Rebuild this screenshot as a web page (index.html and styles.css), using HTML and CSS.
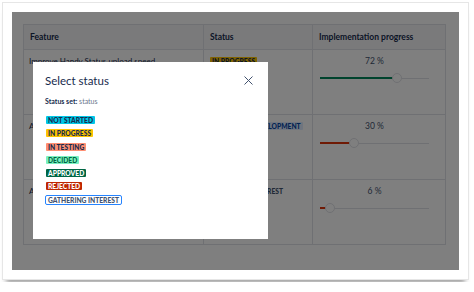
FILE: index.html
```html
<!DOCTYPE html>
<html>
<head>
  <meta charset="utf-8">
  <title>Select status</title>
  <link rel="stylesheet" href="styles.css">
</head>
<body>
  <div class="frame">
    <div class="screen">
      <table class="features">
        <tr>
          <th class="c-feature">Feature</th>
          <th class="c-status">Status</th>
          <th class="c-progress">Implementation progress</th>
        </tr>
        <tr>
          <td>Improve Handy Status upload speed</td>
          <td><span class="lozenge yellow">In progress</span></td>
          <td>
            <div class="pct">72 %</div>
            <div class="slider">
              <div class="fill green" style="width:73px"></div>
              <div class="thumb"></div>
              <div class="track"></div>
            </div>
          </td>
        </tr>
        <tr>
          <td>API</td>
          <td><span class="lozenge blue shifted">In development</span></td>
          <td>
            <div class="pct">30 %</div>
            <div class="slider">
              <div class="fill red" style="width:30px"></div>
              <div class="thumb"></div>
              <div class="track"></div>
            </div>
          </td>
        </tr>
        <tr>
          <td>Apps</td>
          <td><span class="lozenge plain">Gathering interest</span></td>
          <td>
            <div class="pct">6 %</div>
            <div class="slider">
              <div class="fill red" style="width:6px"></div>
              <div class="thumb"></div>
              <div class="track"></div>
            </div>
          </td>
        </tr>
      </table>

      <div class="backdrop"></div>

      <div class="dialog">
        <div class="dialog-head">
          <h2>Select status</h2>
          <svg class="close" width="9" height="9" viewBox="0 0 9 9">
            <path d="M0.5 0.5 L8.5 8.5 M8.5 0.5 L0.5 8.5" stroke="#42526e" stroke-width="1" fill="none"/>
          </svg>
        </div>
        <p class="set"><b>Status set:</b> status</p>
        <div class="choices">
          <span class="lozenge cyan">Not started</span>
          <span class="lozenge yellow">In progress</span>
          <span class="lozenge salmon">In testing</span>
          <span class="lozenge mint">Decided</span>
          <span class="lozenge dkgreen">Approved</span>
          <span class="lozenge dkred">Rejected</span>
          <span class="lozenge plain picked">Gathering interest</span>
        </div>
      </div>
    </div>
  </div>
</body>
</html>
```

FILE: styles.css
```css
body { margin:0; padding:3px; background:#fff; font-family:Lato, "Liberation Sans", sans-serif; color:#172b4d; }

.frame { width:447px; height:258px; padding:9px; background:#fff;
         box-shadow:0 0 0 1px #e6e6e6, 0 7px 5px -3px rgba(0,0,0,0.38); }

.screen { position:relative; width:447px; height:258px; background:#fff; overflow:hidden; }

/* table underneath */
.features { border-collapse:collapse; margin:12px 0 0 11px; table-layout:fixed; width:422px; }
.features th, .features td { box-sizing:border-box; border:1px solid #dfe1e6; text-align:left; vertical-align:top; font-size:8px; }
.features th { height:25px; padding:0 6px; vertical-align:middle; font-weight:bold; font-size:8.5px; background:#f4f5f7; }
.features td { height:65px; padding:6px 5px 0; }
.c-feature { width:180px; }
.c-status { width:109px; }
.c-progress { width:133px; }
.features td:nth-child(3) { padding-left:7px; padding-right:16px; }

.pct { text-align:center; color:#42526e; line-height:10px; font-size:8.5px; }
.slider { display:flex; align-items:center; height:10px; margin-top:7px; }
.fill { height:2px; }
.fill.green { background:#00875a; }
.fill.red { background:#de350b; }
.thumb { width:10px; height:10px; border-radius:50%; background:#fff; border:1px solid #dfe1e6; box-sizing:border-box; flex:none; margin-left:-1px; }
.track { flex:1; height:1px; background:#dfe1e6; }

/* lozenges */
.lozenge { display:inline-block; font-size:6.7px; font-weight:900; text-transform:uppercase; line-height:8px;
           padding:0 2px; border:1px solid transparent; border-radius:2px; background-clip:padding-box; white-space:nowrap; }
.cyan { background-color:#00c7e6; color:#172b4d; }
.yellow { background-color:#ffc400; color:#172b4d; }
.salmon { background-color:#ff8f73; color:#172b4d; }
.mint { background-color:#79f2c0; color:#064; }
.dkgreen { background-color:#064; color:#fff; }
.dkred { background-color:#bf2600; color:#fff; }
.blue { background-color:#deebff; color:#0747a6; }
.plain { background-color:#fff; color:#42526e; }
.picked { border-color:#2684ff; }
.shifted { margin-left:30px; }

.backdrop { position:absolute; inset:0; background:rgba(0,0,0,0.5); }

/* modal */
.dialog { position:absolute; left:21px; top:50px; width:211px; height:166px; padding:11px 12px 0; background:#fff; }
.dialog-head { display:flex; justify-content:space-between; align-items:center; }
.dialog h2 { margin:0; font-size:11.5px; font-weight:normal; line-height:15px; }
.close { margin-right:3px; }
.set { margin:9px 0 0; font-size:7px; color:#6b778c; }
.set b { color:#172b4d; }
.choices { display:flex; flex-direction:column; align-items:flex-start; gap:3.3px; margin-top:10px; }
```
